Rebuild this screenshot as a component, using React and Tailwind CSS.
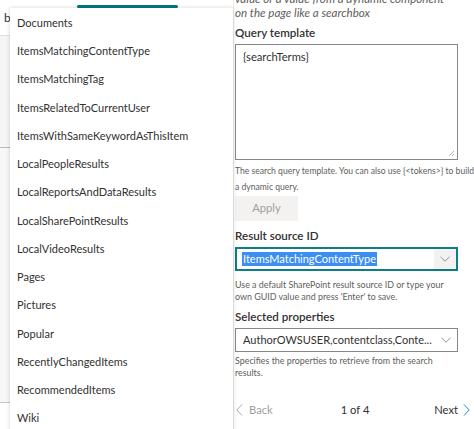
import React from "react";

const items = [
  "Documents",
  "ItemsMatchingContentType",
  "ItemsMatchingTag",
  "ItemsRelatedToCurrentUser",
  "ItemsWithSameKeywordAsThisItem",
  "LocalPeopleResults",
  "LocalReportsAndDataResults",
  "LocalSharePointResults",
  "LocalVideoResults",
  "Pages",
  "Pictures",
  "Popular",
  "RecentlyChangedItems",
  "RecommendedItems",
  "Wiki",
];

function Chevron() {
  return (
    <svg width="10" height="6" viewBox="0 0 10 6">
      <path d="M0.5 0.8 L5 5.2 L9.5 0.8" fill="none" stroke="#8a8886" strokeWidth="0.9" />
    </svg>
  );
}

export default function App() {
  return (
    <div
      className="relative w-[474px] h-[429px] overflow-hidden bg-white flex text-[#323130]"
      style={{ fontFamily: "Lato, 'Open Sans', sans-serif" }}
    >
      {/* underlying page */}
      <div className="w-[233px] shrink-0 flex flex-col">
        <div className="h-[36px] flex items-start border-b border-[#e1dfdd]">
          <span className="ml-[4px] mt-[10px] text-[12px] leading-[16px]">b</span>
          <div className="ml-[66px] mt-[5px] w-[101px] h-[3px] bg-[#03787c] rounded-sm"></div>
        </div>
        <div className="h-[112px] bg-[#f5f5f5] border-b border-[#a9bfc4]"></div>
        <div className="h-[255px] bg-[#f7f7f7] border-b border-[#b8ccd6]"></div>
        <div className="flex-1 bg-white"></div>
      </div>

      {/* right panel */}
      <div className="w-[241px] shrink-0 border-l border-[#edebe9] pl-[1px] flex flex-col">
        <div className="mt-[-8px] text-[11.6px] leading-[14px] italic text-[#605e5c] whitespace-nowrap">
          <div>value or a value from a dynamic component</div>
          <div>on the page like a searchbox</div>
        </div>
        <div className="mt-[5px] text-[11.6px] leading-[16px] font-semibold">Query template</div>
        <div className="mt-[3px] w-[223px] h-[116px] border border-[#8a8886] relative">
          <div className="pl-[7px] pt-[5px] text-[11.2px] leading-[14px] text-[#323130]">{"{searchTerms}"}</div>
          <svg className="absolute right-[2px] bottom-[2px]" width="7" height="7" viewBox="0 0 7 7">
            <path d="M6 1 L1 6 M6 4 L4 6" stroke="#a19f9d" strokeWidth="0.8" />
          </svg>
        </div>
        <div className="mt-[3px] text-[8.6px] leading-[16px] text-[#605e5c]">
          <div className="whitespace-nowrap">The search query template. You can also use {"{<tokens>}"} to build</div>
          <div>a dynamic query.</div>
        </div>
        <div className="mt-[1px] w-[63px] h-[25px] bg-[#f3f2f1] text-[#a19f9d] text-[11.2px] flex items-center justify-center">
          Apply
        </div>
        <div className="mt-[7px] text-[11.6px] leading-[16px] font-semibold">Result source ID</div>
        <div className="mt-[3px] w-[223px] h-[24px] border-2 border-[#0b7f83] flex items-center">
          <span className="ml-[5px] bg-[#3c8ef0] text-white text-[11px] leading-[14px] px-[1px]">ItemsMatchingContentType</span>
          <div className="ml-auto w-[22px] h-full bg-[#f3f2f1] flex items-center justify-center">
            <Chevron />
          </div>
        </div>
        <div className="mt-[8px] text-[8.9px] leading-[12px] text-[#605e5c]">
          <div className="whitespace-nowrap">Use a default SharePoint result source ID or type your</div>
          <div>own GUID value and press 'Enter' to save.</div>
        </div>
        <div className="mt-[6px] text-[11.6px] leading-[16px] font-semibold">Selected properties</div>
        <div className="mt-[3px] w-[223px] h-[24px] border border-[#8a8886] flex items-center">
          <span className="ml-[7px] text-[11px] leading-[16px] text-[#323130] whitespace-nowrap">AuthorOWSUSER,contentclass,Conte...</span>
          <div className="ml-auto mr-[6px] flex items-center justify-center">
            <Chevron />
          </div>
        </div>
        <div className="mt-[3px] text-[8.9px] leading-[12px] text-[#605e5c]">
          <div className="whitespace-nowrap">Specifies the properties to retrieve from the search</div>
          <div>results.</div>
        </div>
        <div className="mt-[23px] flex items-center text-[11.2px] leading-[16px] w-[235px]">
          <div className="flex items-center text-[#a19f9d] ml-[1px]">
            <svg width="7" height="12" viewBox="0 0 7 12" className="mr-[6px]">
              <path d="M6 0.5 L0.8 6 L6 11.5" fill="none" stroke="#a19f9d" strokeWidth="0.9" />
            </svg>
            Back
          </div>
          <div className="ml-[68px] text-[#323130]">1 of 4</div>
          <div className="ml-auto flex items-center text-[#323130]">
            Next
            <svg width="7" height="12" viewBox="0 0 7 12" className="ml-[5px]">
              <path d="M1 0.5 L6.2 6 L1 11.5" fill="none" stroke="#0078d4" strokeWidth="0.9" />
            </svg>
          </div>
        </div>
      </div>

      {/* dropdown menu */}
      <div className="absolute left-[10px] top-[8px] w-[223px] bottom-[-10px] bg-white shadow-[0_0_4px_rgba(0,0,0,0.18)] pt-[1px]">
        {items.map((it) => (
          <div key={it} className="h-[28.25px] flex items-center pl-[7px] text-[11px] text-[#323130] whitespace-nowrap">
            {it}
          </div>
        ))}
      </div>
    </div>
  );
}
